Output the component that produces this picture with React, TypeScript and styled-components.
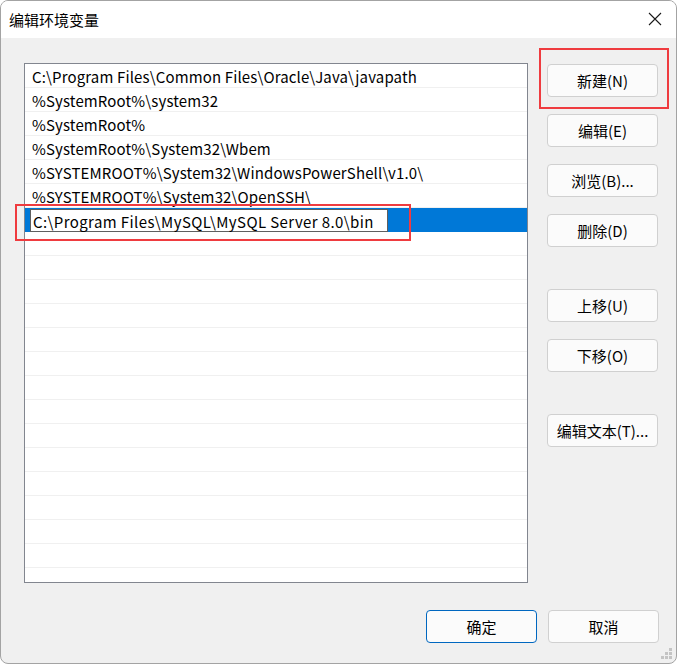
import React from 'react';
import styled, {createGlobalStyle} from 'styled-components';

const GlobalStyle = createGlobalStyle`
  html, body {
    margin: 0;
    padding: 0;
    background: #ffffff;
  }
  * {
    box-sizing: border-box;
  }
`;

const uiFont = `"Noto Sans CJK SC", "Noto Sans", sans-serif`;

const Window = styled.div`
  width: 677px;
  height: 664px;
  border: 1px solid #a3a3a3;
  border-radius: 8px;
  overflow: hidden;
  background: #f0f0f0;
  display: flex;
  flex-direction: column;
  font-family: ${uiFont};
  font-size: 15px;
  color: #000;
  position: relative;
`;

const TitleBar = styled.div`
  height: 37px;
  background: #ffffff;
  display: flex;
  align-items: center;
  justify-content: space-between;
  padding: 0 14px 0 8px;
  flex-shrink: 0;
`;

const Title = styled.span`
  font-size: 15px;
  line-height: 1;
  margin-top: -1px;
`;

const CloseButton = styled.div`
  width: 14px;
  height: 14px;
  display: flex;
  margin-top: -1px;
`;

const Body = styled.div`
  flex: 1;
  display: flex;
  flex-direction: column;
  padding: 25px 17px 0 23px;
`;

const Main = styled.div`
  display: flex;
  gap: 19px;
`;

const List = styled.div`
  width: 504px;
  height: 520px;
  border: 1px solid #82868f;
  background: #ffffff;
  overflow: hidden;
`;

const Row = styled.div<{$selected?: boolean}>`
  height: 24px;
  border-bottom: 1px solid ${({$selected}) => ($selected ? '#0078d7' : '#f0f0f0')};
  background: ${({$selected}) => ($selected ? '#0078d7' : 'transparent')};
  display: flex;
  align-items: center;
  padding-left: 7px;
  padding-top: 1px;
  white-space: nowrap;
  line-height: 1;
  letter-spacing: 0.14px;
  position: relative;
`;

const EditBox = styled.div`
  position: absolute;
  left: 5px;
  top: 1px;
  width: 358px;
  height: 23px;
  background: #ffffff;
  border: 1px solid #5f5f5f;
  display: flex;
  align-items: center;
  padding: 1px 0 0 2px;
  letter-spacing: 0.4px;
`;

const Highlight = styled.div<{$l: number; $t: number; $w: number; $h: number}>`
  position: absolute;
  left: ${({$l}) => $l}px;
  top: ${({$t}) => $t}px;
  width: ${({$w}) => $w}px;
  height: ${({$h}) => $h}px;
  border: 2px solid #ef3b3f;
  pointer-events: none;
`;

const ButtonColumn = styled.div`
  width: 111px;
  display: flex;
  flex-direction: column;
  padding-top: 1px;
`;

const Button = styled.div<{$gap?: number; $primary?: boolean}>`
  width: 111px;
  height: 33px;
  margin-top: ${({$gap}) => $gap ?? 0}px;
  border: 1px solid ${({$primary}) => ($primary ? '#0067c0' : '#d0d0d0')};
  border-radius: 4px;
  background: #fbfbfb;
  display: flex;
  align-items: center;
  justify-content: center;
  font-size: 15px;
  line-height: 1;
  white-space: nowrap;
`;

const Footer = styled.div`
  display: flex;
  justify-content: flex-end;
  gap: 11px;
  margin-top: 27px;
`;

const Grip = styled.div`
  position: absolute;
  right: 3px;
  bottom: 3px;
  width: 12px;
  height: 12px;
  display: flex;
`;

const paths = [
  'C:\\Program Files\\Common Files\\Oracle\\Java\\javapath',
  '%SystemRoot%\\system32',
  '%SystemRoot%',
  '%SystemRoot%\\System32\\Wbem',
  '%SYSTEMROOT%\\System32\\WindowsPowerShell\\v1.0\\',
  '%SYSTEMROOT%\\System32\\OpenSSH\\',
];

const sideButtons = [
  {label: '新建(N)', gap: 0},
  {label: '编辑(E)', gap: 17},
  {label: '浏览(B)...', gap: 17},
  {label: '删除(D)', gap: 17},
  {label: '上移(U)', gap: 42},
  {label: '下移(O)', gap: 17},
  {label: '编辑文本(T)...', gap: 42},
];

export default function App() {
  const emptyRows = Array.from({length: 15});
  return (
    <>
      <GlobalStyle />
      <Window>
        <TitleBar>
          <Title>编辑环境变量</Title>
          <CloseButton>
            <svg width="14" height="14" viewBox="0 0 14 14">
              <path d="M1 1L13 13M13 1L1 13" stroke="#1a1a1a" strokeWidth="1.1" fill="none" />
            </svg>
          </CloseButton>
        </TitleBar>
        <Body>
          <Main>
            <List>
              {paths.map((p) => (
                <Row key={p}>{p}</Row>
              ))}
              <Row $selected>
                <EditBox>C:\Program Files\MySQL\MySQL Server 8.0\bin</EditBox>
              </Row>
              {emptyRows.map((_, i) => (
                <Row key={i} />
              ))}
            </List>
            <ButtonColumn>
              {sideButtons.map((b) => (
                <Button key={b.label} $gap={b.gap}>
                  {b.label}
                </Button>
              ))}
            </ButtonColumn>
          </Main>
          <Footer>
            <Button $primary>确定</Button>
            <Button>取消</Button>
          </Footer>
        </Body>
        <Highlight $l={14} $t={203} $w={396} $h={37} />
        <Highlight $l={538} $t={47} $w={130} $h={61} />
        <Grip>
          <svg width="12" height="12" viewBox="0 0 12 12" fill="#c4c4c4">
            <rect x="8" y="0" width="3" height="3" />
            <rect x="4" y="4" width="3" height="3" />
            <rect x="8" y="4" width="3" height="3" />
            <rect x="0" y="8" width="3" height="3" />
            <rect x="4" y="8" width="3" height="3" />
            <rect x="8" y="8" width="3" height="3" />
          </svg>
        </Grip>
      </Window>
    </>
  );
}
